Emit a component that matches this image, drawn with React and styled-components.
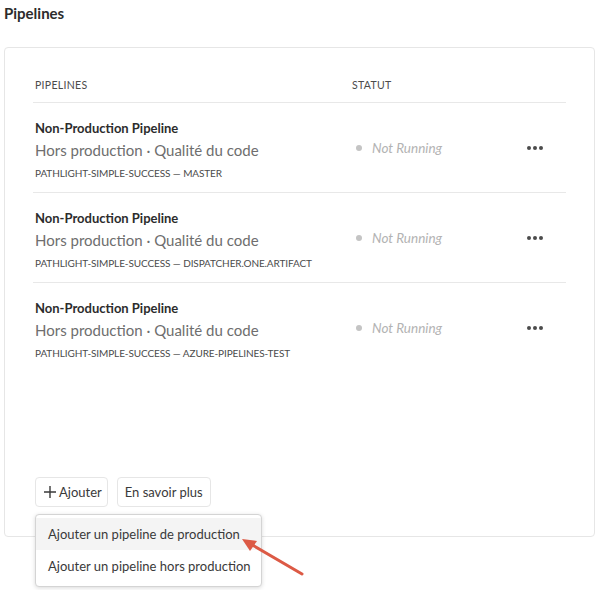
import styled, { createGlobalStyle } from 'styled-components';

const GlobalStyle = createGlobalStyle`
  body {
    margin: 0;
    background: #fff;
    font-family: Lato, "Noto Sans", sans-serif;
    color: #2c2c2c;
  }
`;

const Page = styled.div`
  position: relative;
  width: 598px;
  height: 590px;
  padding: 0 3px 0 4px;
  box-sizing: border-box;
`;

const Title = styled.h2`
  margin: 0;
  padding-top: 4px;
  font-size: 15px;
  font-weight: 700;
  line-height: 18px;
  color: #2c2c2c;
`;

const Card = styled.div`
  margin-top: 25px;
  height: 490px;
  box-sizing: border-box;
  border: 1px solid #e6e6e6;
  border-radius: 4px;
  padding: 21px 28px 0 28px;
  position: relative;
`;

const Grid = styled.div`
  display: grid;
  grid-template-columns: 317px 150px 1fr;
  align-items: center;
  padding: 0 2px;
  border-bottom: ${({ last }) => (last ? 'none' : '1px solid #e8e8e8')};
`;

const HeadCell = styled.div`
  font-size: 10.5px;
  letter-spacing: 0.3px;
  text-transform: uppercase;
  color: #4b4b4b;
  height: 33px;
  line-height: 33px;
`;

const Row = styled(Grid)`
  height: 89px;
`;

const Info = styled.div`
  align-self: start;
  display: flex;
  flex-direction: column;
  padding-top: 16px;
`;

const Name = styled.div`
  font-size: 13px;
  font-weight: 700;
  line-height: 18px;
  color: #2c2c2c;
`;

const Sub = styled.div`
  font-size: 15px;
  line-height: 22px;
  color: #6e6e6e;
  margin-top: 2px;
`;

const Meta = styled.div`
  font-size: 10px;
  line-height: 16px;
  margin-top: 4px;
  text-transform: uppercase;
  color: #4b4b4b;
  letter-spacing: -0.1px;
`;

const Status = styled.div`
  display: flex;
  align-items: center;
  gap: 10px;
  font-size: 13.5px;
  font-style: italic;
  color: #b3b3b3;
  padding-left: 4px;
`;

const Dot = styled.span`
  width: 6px;
  height: 6px;
  border-radius: 50%;
  background: #c4c4c4;
`;

const More = styled.div`
  display: flex;
  gap: 2px;
  margin-left: 25px;
  margin-top: 1px;
  span {
    width: 4px;
    height: 4px;
    border-radius: 50%;
    background: #4b4b4b;
  }
`;

const Actions = styled.div`
  position: relative;
  display: flex;
  gap: 9px;
  margin-top: 105px;
  padding-left: 2px;
`;

const Button = styled.button`
  display: flex;
  align-items: center;
  gap: 2px;
  height: 30px;
  padding: 0 ${({ icon }) => (icon ? '5px 0 7px' : '7px')};
  border: 1px solid #e6e6e6;
  border-radius: 4px;
  background: #fff;
  font-family: inherit;
  font-size: 13px;
  color: #3a3a3a;
`;

const Menu = styled.div`
  position: absolute;
  top: 37px;
  left: 2px;
  width: 227px;
  box-sizing: border-box;
  padding: 3px 0;
  background: #fff;
  border: 1px solid #d4d4d4;
  border-radius: 4px;
  box-shadow: 0 1px 4px rgba(0, 0, 0, 0.15);
  z-index: 2;
`;

const MenuItem = styled.div`
  height: ${({ active }) => (active ? '32px' : '33px')};
  line-height: ${({ active }) => (active ? '32px' : '33px')};
  padding-left: 12px;
  font-size: 13px;
  white-space: nowrap;
  color: #3a3a3a;
  background: ${({ active }) => (active ? '#f4f4f4' : 'transparent')};
`;

const Arrow = styled.svg`
  position: absolute;
  left: 237px;
  top: 533px;
  z-index: 3;
`;

const pipelines = [
  { branch: 'master' },
  { branch: 'dispatcher.one.artifact' },
  { branch: 'azure-pipelines-test' },
];

export default function App() {
  return (
    <Page>
      <GlobalStyle />
      <Title>Pipelines</Title>
      <Card>
        <Grid>
          <HeadCell>Pipelines</HeadCell>
          <HeadCell>Statut</HeadCell>
          <HeadCell />
        </Grid>
        {pipelines.map((p, i) => (
          <Row key={p.branch} last={i === pipelines.length - 1}>
            <Info>
              <Name>Non-Production Pipeline</Name>
              <Sub>Hors production · Qualité du code</Sub>
              <Meta>pathlight-simple-success — {p.branch}</Meta>
            </Info>
            <Status>
              <Dot />
              Not Running
            </Status>
            <More>
              <span />
              <span />
              <span />
            </More>
          </Row>
        ))}
        <Actions>
          <Button icon>
            <svg width="14" height="14" viewBox="0 0 14 14">
              <path d="M7 1v12M1 7h12" stroke="#3a3a3a" strokeWidth="1.4" />
            </svg>
            Ajouter
          </Button>
          <Button>En savoir plus</Button>
          <Menu>
            <MenuItem active>Ajouter un pipeline de production</MenuItem>
            <MenuItem>Ajouter un pipeline hors production</MenuItem>
          </Menu>
        </Actions>
      </Card>
      <Arrow width="70" height="46" viewBox="0 0 70 46">
        <path d="M65 41L12 10" stroke="#dc5a45" strokeWidth="3" strokeLinecap="round" />
        <path d="M5 6L20 8L13 18Z" fill="#dc5a45" />
      </Arrow>
    </Page>
  );
}
